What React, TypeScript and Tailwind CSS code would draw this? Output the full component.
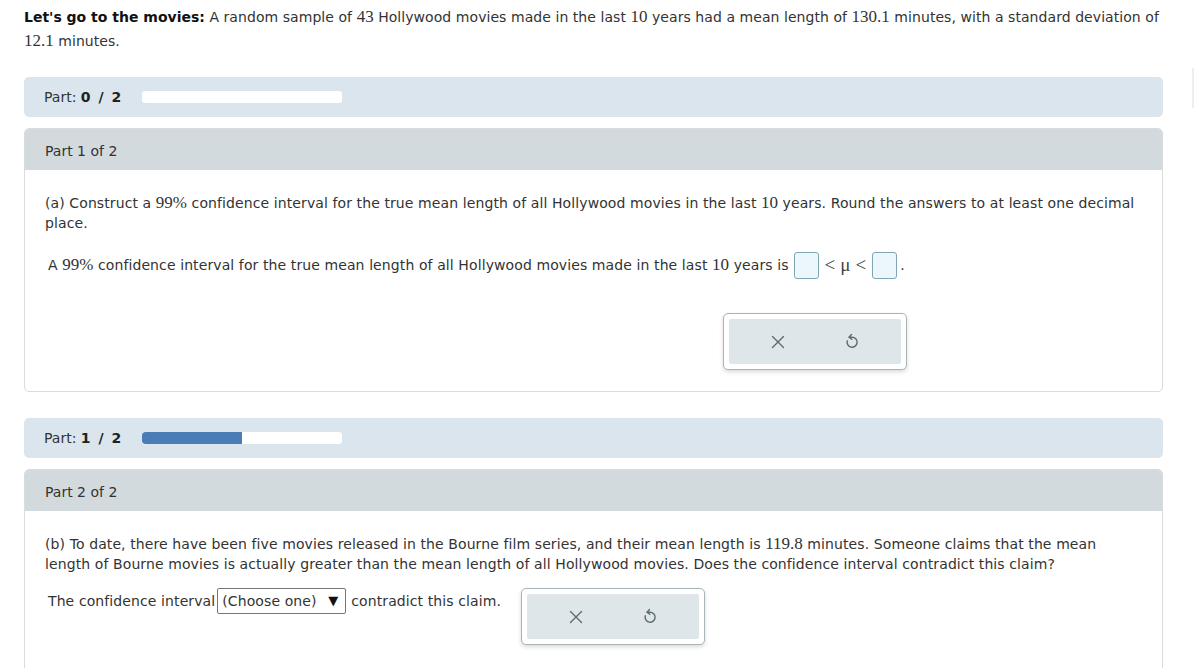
import React from "react";

const N = ({ children }: { children: React.ReactNode }) => (
  <span className="font-['Liberation_Serif','Times_New_Roman',serif] text-[17px] tracking-normal">{children}</span>
);

const XIcon = () => (
  <svg width="16" height="16" viewBox="0 0 16 16" fill="none" stroke="#5b6b74" strokeWidth="1.4" strokeLinecap="round">
    <path d="M2.5 2.5 L13.5 13.5 M13.5 2.5 L2.5 13.5" />
  </svg>
);

const UndoIcon = () => (
  <svg width="14" height="17" viewBox="0 0 14 17" fill="none" stroke="#5b6b74" strokeWidth="1.4" strokeLinecap="round" strokeLinejoin="round">
    <path d="M6.5 1.5 L4 4.2 L6.8 6.3" />
    <path d="M4.2 4.2 H7 A5 5 0 1 1 2.3 7.8" />
  </svg>
);

const ButtonGroup = () => (
  <div className="w-[184px] h-[57px] p-[5px] bg-white border border-[#a9b3b8] rounded-[5px] shadow-[0_2px_4px_rgba(0,0,0,0.15)]">
    <div className="flex h-full items-center justify-around bg-[#dfe6e9] rounded-[2px] px-3">
      <span className="flex w-[60px] justify-center"><XIcon /></span>
      <span className="flex w-[60px] justify-center"><UndoIcon /></span>
    </div>
  </div>
);

const Box = () => (
  <span className="inline-block align-middle w-[25px] h-[27px] border border-[#7fa6b2] bg-[#ebf7fb] rounded-[3px]" />
);

const ProgressBar = ({ pct }: { pct: number }) => (
  <div className="w-[200px] h-[12px] bg-white rounded-[3px] overflow-hidden">
    <div className="h-full bg-[#4a7db5] rounded-l-[3px]" style={{ width: `${pct}%` }} />
  </div>
);

const PartBar = ({ n, pct }: { n: number; pct: number }) => (
  <div className="flex items-center h-[40px] bg-[#dbe5ee] rounded-[5px] pl-[20px]">
    <span className="w-[98px]">
      Part: <b className="font-bold text-[#222] tracking-[1.5px]">{n} / 2</b>
    </span>
    <ProgressBar pct={pct} />
  </div>
);

export default function App() {
  return (
    <div className="w-[1195px] h-[668px] overflow-hidden bg-white relative font-['DejaVu_Sans','Verdana',sans-serif] text-[14px] text-[#333] pl-[24px] pr-[32px]">
      <div className="absolute right-[1px] top-[68px] w-[2px] h-[40px] bg-[#eceeef]" />
      <p className="pt-[5px] leading-[24px] tracking-[0.06px]">
        <b className="text-[#111] tracking-normal">Let's go to the movies:</b> A random sample of <N>43</N> Hollywood movies made in the last <N>10</N> years had a mean length of <N>130.1</N> minutes, with a standard deviation of <N>12.1</N> minutes.
      </p>

      <div className="mt-[24px]">
        <PartBar n={0} pct={0} />
      </div>

      <div className="mt-[11px] rounded-[5px] border border-[#d9dcde] overflow-hidden">
        <div className="h-[41px] flex items-center bg-[#d3dadd] pl-[20px] pt-[3px]">Part 1 of 2</div>
        <div className="h-[221px] pl-[20px] pr-[20px] pt-[23px] tracking-[0.1px]">
          <p className="leading-[20px]">
            (a) Construct a <N>99%</N> confidence interval for the true mean length of all Hollywood movies in the last <N>10</N> years. Round the answers to at least one decimal place.
          </p>
          <div className="mt-[18px] pl-[3px] flex items-center h-[28px]">
            <span>A <N>99%</N> confidence interval for the true mean length of all Hollywood movies made in the last <N>10</N> years is</span>
            <span className="ml-[5px]"><Box /></span>
            <span className="flex items-center gap-[5px] mx-[6px] font-['Liberation_Serif',serif] text-[19px] tracking-normal text-[#444]">
              <span>&lt;</span>
              <span>μ</span>
              <span>&lt;</span>
            </span>
            <Box />
            <span className="ml-[3px]">.</span>
          </div>
          <div className="mt-[34px] ml-[678px]">
            <ButtonGroup />
          </div>
        </div>
      </div>

      <div className="mt-[26px]">
        <PartBar n={1} pct={50} />
      </div>

      <div className="mt-[11px] rounded-t-[5px] border border-[#d9dcde] h-[220px] overflow-hidden">
        <div className="h-[41px] flex items-center bg-[#d3dadd] pl-[20px] pt-[3px]">Part 2 of 2</div>
        <div className="pl-[20px] pr-[30px] pt-[23px] tracking-[0.1px]">
          <p className="leading-[20px]">
            (b) To date, there have been five movies released in the Bourne film series, and their mean length is <N>119.8</N> minutes. Someone claims that the mean length of Bourne movies is actually greater than the mean length of all Hollywood movies. Does the confidence interval contradict this claim?
          </p>
          <div className="mt-[14px] pl-[3px] flex items-start">
            <span className="leading-[26px]">The confidence interval</span>
            <span className="ml-[2px] inline-flex items-center h-[26px] w-[129px] border border-[#767676] rounded-[2px] pl-[4px] pr-[7px] justify-between bg-white">
              <span>(Choose one)</span>
              <span className="text-[13px] text-[#111]">▼</span>
            </span>
            <span className="ml-[5px] leading-[26px]">contradict this claim.</span>
            <span className="ml-[20px]">
              <ButtonGroup />
            </span>
          </div>
        </div>
      </div>
    </div>
  );
}
